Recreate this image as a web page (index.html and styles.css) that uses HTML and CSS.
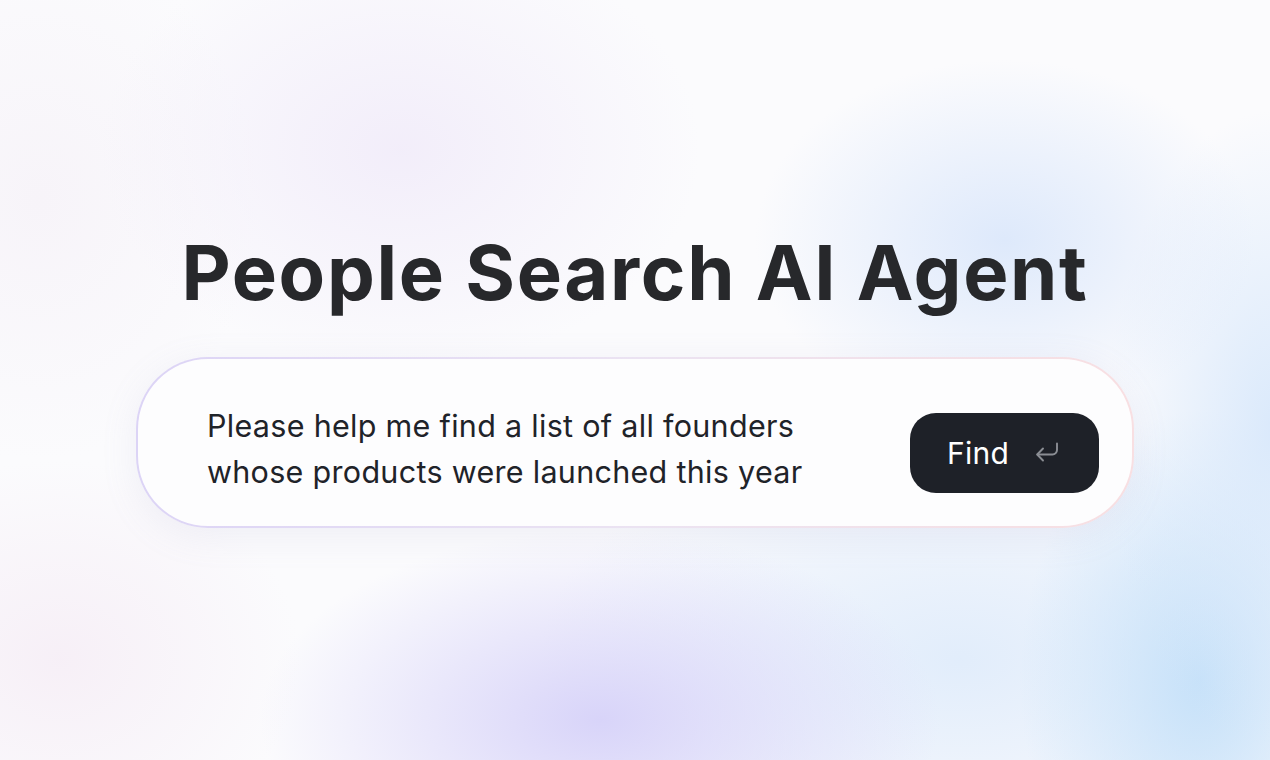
FILE: index.html
```html
<!DOCTYPE html>
<html lang="en">
<head>
<meta charset="utf-8">
<title>People Search AI Agent</title>
<link rel="stylesheet" href="styles.css">
</head>
<body>
<main class="hero">
  <h1 class="title">People Search AI Agent</h1>
  <div class="search">
    <p class="query">Please help me find a list of all founders<br>whose products were launched this year</p>
    <button class="find">
      <span class="find-label">Find</span>
      <svg class="enter" width="24" height="22" viewBox="0 0 24 22" fill="none" stroke="currentColor" stroke-width="1.9" stroke-linecap="round" stroke-linejoin="round"><path d="M22 1.5v6.5a4.5 4.5 0 0 1-4.5 4.5H2.5"></path><path d="M8 6.5L2.2 12.5L8 18.5"></path></svg>
    </button>
  </div>
</main>
</body>
</html>
```

FILE: styles.css
```css
html, body {
  margin: 0;
  height: 100%;
}
body {
  width: 1270px;
  height: 760px;
  overflow: hidden;
  font-family: Inter, "Noto Sans", sans-serif;
  background-color: #fbfbfd;
  background-image:
    radial-gradient(ellipse 300px 220px at 400px 150px, rgba(240, 234, 249, 0.8), rgba(240, 234, 249, 0) 100%),
    radial-gradient(ellipse 250px 180px at 1005px 240px, rgba(220, 232, 251, 0.95), rgba(220, 232, 251, 0) 100%),
    radial-gradient(ellipse 170px 320px at 1275px 430px, rgba(216, 232, 251, 0.95), rgba(216, 232, 251, 0) 100%),
    radial-gradient(ellipse 340px 190px at 600px 720px, rgba(216, 212, 249, 1), rgba(216, 212, 249, 0) 100%),
    radial-gradient(ellipse 180px 270px at 1200px 680px, rgba(198, 225, 249, 1), rgba(198, 225, 249, 0) 100%),
    radial-gradient(ellipse 420px 240px at 960px 660px, rgba(224, 236, 251, 0.95), rgba(224, 236, 251, 0) 100%),
    radial-gradient(ellipse 240px 200px at 60px 660px, rgba(246, 238, 246, 0.9), rgba(246, 238, 246, 0) 100%),
    radial-gradient(ellipse 220px 260px at 40px 200px, rgba(246, 242, 248, 0.8), rgba(246, 242, 248, 0) 100%);
}
.hero {
  display: flex;
  flex-direction: column;
  align-items: center;
  padding-top: 222px;
}
.title {
  margin: 0;
  font-family: Inter, "Noto Sans", sans-serif;
  font-weight: 700;
  font-size: 76px;
  line-height: 100px;
  letter-spacing: 1.65px;
  color: #27282b;
}
.search {
  margin-top: 35px;
  box-sizing: border-box;
  width: 998px;
  height: 171px;
  border: 2px solid transparent;
  border-radius: 72px;
  background:
    linear-gradient(#fdfdfe, #fdfdfe) padding-box,
    linear-gradient(90deg, #dcd4f6, #ebe3f2 50%, #f8dfe2) border-box;
  box-shadow: 0 8px 36px rgba(150, 150, 190, 0.12);
  display: flex;
  align-items: flex-start;
  justify-content: space-between;
  padding: 44px 33px 0 69px;
}
.query {
  margin: 0;
  font-size: 30.5px;
  line-height: 46px;
  color: #1f2329;
  letter-spacing: 0.3px;
}
.find {
  margin-top: 10px;
  display: flex;
  align-items: center;
  gap: 26px;
  width: 189px;
  height: 80px;
  box-sizing: border-box;
  padding: 0 0 0 37px;
  border: none;
  border-radius: 26px;
  background: #1e2128;
  color: #ffffff;
  font-family: Inter, "Noto Sans", sans-serif;
  font-size: 30px;
  letter-spacing: 0.3px;
  cursor: pointer;
}
.find-label {
  line-height: 1;
}
.enter {
  color: #8b8e94;
  flex: none;
}
```
